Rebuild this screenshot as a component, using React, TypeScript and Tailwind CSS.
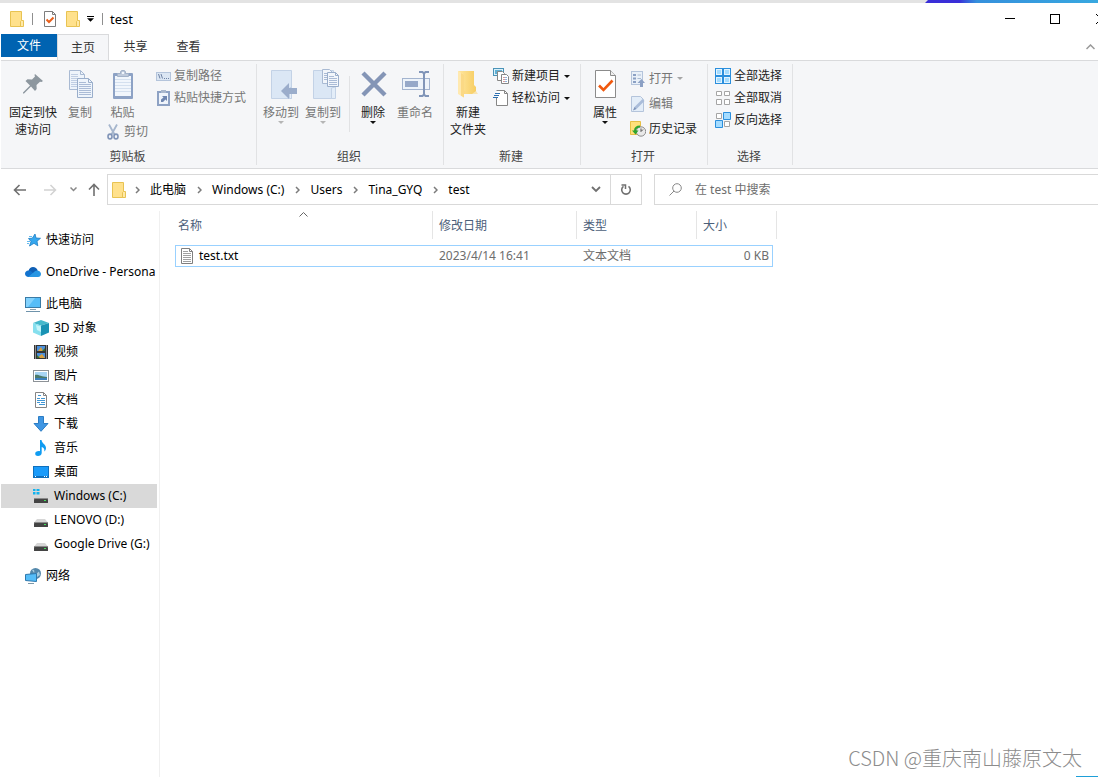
import React from 'react';

type IconProps = { className?: string };

const FolderIcon: React.FC<IconProps> = ({ className = '' }) => (
    <svg width="14" height="16" viewBox="0 0 14 16" className={className} aria-hidden="true">
        <path d="M0.5 0.5H11.5V9L12.5 10V15.5H0.5Z" fill="#ffe18c" stroke="#e8c352" />
        <path d="M10.5 10.5V15.5H13.5V9.5H11.5Z" fill="#ffe9a8" stroke="#e8c352" />
    </svg>
);

const CheckedPageIcon: React.FC = () => (
    <svg width="12" height="16" viewBox="0 0 12 16" aria-hidden="true">
        <path d="M0.5 0.5H8.5L11.5 3.5V15.5H0.5Z" fill="#fff" stroke="#7d7d7d" />
        <path d="M8.5 0.5V3.5H11.5" fill="none" stroke="#7d7d7d" />
        <path d="M2.5 8.5L5 11L9.5 6.5" fill="none" stroke="#e8601c" strokeWidth="2" />
    </svg>
);

const PinIcon: React.FC = () => (
    <svg width="20" height="20" viewBox="0 0 20 20" aria-hidden="true">
        <path
            d="M12 0L20 7L18.5 8L17 7.7L13.5 11L13.7 15L12 17L8 12.5L1 19.5L0 19.5L0 18.5L7 11.5L2.5 7L4.5 5.2L9 5.6L12 2.5L11.5 1Z"
            fill="#8d979f"
        />
    </svg>
);

const CopyIcon: React.FC = () => (
    <svg width="24" height="28" viewBox="0 0 24 28" className="ml-0.5" aria-hidden="true">
        <path d="M0.5 0.5H11.5L15.5 4.5V19.5H0.5Z" fill="#eef4fb" stroke="#a9bad3" />
        <path d="M11.5 0.5V4.5H15.5" fill="none" stroke="#a9bad3" />
        <path
            d="M2 4.5H9M2 6.5H9M2 8.5H13M2 10.5H13M2 12.5H13M2 14.5H13M2 16.5H13"
            stroke="#c0cee3"
        />
        <path d="M8.5 8.5H19.5L23.5 12.5V27.5H8.5Z" fill="#eef4fb" stroke="#9aaecb" />
        <path d="M19.5 8.5V12.5H23.5" fill="none" stroke="#9aaecb" />
        <path
            d="M10 12.5H17M10 14.5H22M10 16.5H22M10 18.5H22M10 20.5H22M10 22.5H22M10 24.5H22"
            stroke="#aabbd6"
        />
    </svg>
);

const PasteIcon: React.FC = () => (
    <svg width="20" height="29" viewBox="0 0 20 29" aria-hidden="true">
        <rect x="0" y="3" width="20" height="26" rx="1" fill="#8da2c5" />
        <rect x="2" y="6" width="16" height="20" fill="#f1f6fc" />
        <path d="M2 9.5H18M2 12.5H18M2 15.5H18M2 18.5H18M2 21.5H18" stroke="#d4e0ef" />
        <path d="M4.5 6.5V3.5H7.5V1.5H8.5V0.5H11.5V1.5H12.5V3.5H15.5V6.5Z" fill="#bfcadb" stroke="#a3b2c9" />
        <rect x="9" y="2" width="2" height="2" fill="#f1f6fc" />
    </svg>
);

const CutIcon: React.FC = () => (
    <svg width="12" height="16" viewBox="0 0 12 16" aria-hidden="true">
        <path d="M2 0.5L7.8 11M10 0.5L4.2 11" stroke="#a6b6cd" strokeWidth="1.8" />
        <ellipse cx="3" cy="12.5" rx="2" ry="2.4" fill="none" stroke="#8195b8" strokeWidth="1.6" />
        <ellipse cx="9" cy="12.5" rx="2" ry="2.4" fill="none" stroke="#8195b8" strokeWidth="1.6" />
    </svg>
);

const CopyPathIcon: React.FC = () => (
    <svg width="15" height="9" viewBox="0 0 15 9" aria-hidden="true">
        <rect x="0.5" y="0.5" width="14" height="8" fill="#dbe6f3" stroke="#b4c4db" />
        <path d="M2.5 2L4 6.5M5 2L6.5 6.5" stroke="#6f83a6" />
        <path d="M8 6.5H9M10 6.5H11M12 6.5H13" stroke="#6f83a6" />
    </svg>
);

const PasteShortcutIcon: React.FC = () => (
    <svg width="13" height="16" viewBox="0 0 13 16" aria-hidden="true">
        <rect x="1" y="2" width="11" height="13" fill="#eff4fb" stroke="#8ea2c4" strokeWidth="2" />
        <rect x="4" y="0" width="5" height="3" fill="#a9b7cc" />
        <path d="M4 12V9.5L6.5 7.5L5 6H10V11L8.5 9.5L6 12Z" fill="#6f86b0" />
    </svg>
);

const MoveToIcon: React.FC = () => (
    <svg width="26" height="29" viewBox="0 0 26 29" className="ml-[5px]" aria-hidden="true">
        <path d="M0.5 0.5H20.5V28.5H0.5Z" fill="#dbe7f5" stroke="#c3d2e6" />
        <path d="M18.5 18V28.5H20.5V17Z" fill="#e8f0f9" stroke="#c3d2e6" />
        <path d="M10 21L18 13V18H26V24H18V29Z" fill="#9badcb" />
    </svg>
);

const CopyToIcon: React.FC = () => (
    <svg width="26" height="30" viewBox="0 0 26 30" className="ml-[5px]" aria-hidden="true">
        <path d="M0.5 1.5H20.5V29.5H0.5Z" fill="#dbe7f5" stroke="#c3d2e6" />
        <path d="M18.5 19V29.5H22.5V18Z" fill="#e3edf8" stroke="#c3d2e6" />
        <path d="M9.5 0.5H16.5L19.5 3.5V14.5H9.5Z" fill="#f2f6fb" stroke="#a9bad3" />
        <path d="M11 4.5H15M11 6.5H15M11 8.5H15M11 10.5H15" stroke="#aabbd6" />
        <path d="M14.5 3.5H22.5L25.5 6.5V17.5H14.5Z" fill="#f2f6fb" stroke="#9aaecb" />
        <path d="M22.5 3.5V6.5H25.5" fill="none" stroke="#9aaecb" />
        <path d="M16 7.5H21M16 9.5H24M16 11.5H24M16 13.5H24M16 15.5H24" stroke="#aabbd6" />
    </svg>
);

const DeleteIcon: React.FC = () => (
    <svg width="26" height="26" viewBox="0 0 26 26" className="ml-0.5" aria-hidden="true">
        <path d="M2 2L24 24M24 2L2 24" stroke="#8495b6" strokeWidth="4.4" />
    </svg>
);

const RenameIcon: React.FC = () => (
    <svg width="28" height="26" viewBox="0 0 28 26" className="ml-0.5" aria-hidden="true">
        <rect x="0.5" y="7.5" width="27" height="11" fill="#edf3fa" stroke="#a3b4cf" />
        <rect x="3" y="10" width="13" height="6" fill="#96a8c8" />
        <path
            d="M17 1H20.5L22 2.5L23.5 1H27M22 2V24M17 25H20.5L22 23.5L23.5 25H27"
            fill="none"
            stroke="#8195b8"
            strokeWidth="2"
        />
    </svg>
);

const NewFolderIcon: React.FC = () => (
    <svg width="20" height="28" viewBox="0 0 20 28" aria-hidden="true">
        <defs>
            <linearGradient id="folder-back" x1="0" x2="1">
                <stop offset="0" stopColor="#ffe7a0" />
                <stop offset="1" stopColor="#f7cd62" />
            </linearGradient>
        </defs>
        <path d="M0 1H16V15L18 17V24H4Z" fill="url(#folder-back)" />
        <path d="M14 24L18 21L20 24Z" fill="#f8e5b4" />
        <path d="M0 1L6 4.5V27.5L0 24Z" fill="#ffe9b0" />
        <path d="M3 3L6 4.5V21H7.5V24H6V27.5L3 25.7Z" fill="#fbd985" />
    </svg>
);

const NewItemIcon: React.FC = () => (
    <svg width="16" height="16" viewBox="0 0 16 16" aria-hidden="true">
        <rect x="0.5" y="0.5" width="10" height="7" fill="#d9f0fa" stroke="#4a93b8" />
        <rect x="2" y="2" width="7" height="4" fill="#5fb0d4" />
        <path d="M4.5 3.5H9.5L11.5 5.5V12.5H4.5Z" fill="#fff" stroke="#868686" />
        <path d="M8.5 6.5H13.5L15.5 8.5V15.5H8.5Z" fill="#fff" stroke="#868686" />
        <path d="M10 9.5H14M10 11.5H14M10 13.5H14" stroke="#d79a9a" />
        <path d="M12 9.5H14M12 11.5H14M12 13.5H14" stroke="#8fb4dc" />
    </svg>
);

const EasyAccessIcon: React.FC = () => (
    <svg width="16" height="16" viewBox="0 0 16 16" aria-hidden="true">
        <path d="M3.5 0.5H11.5L14.5 3.5V15.5H3.5V8" fill="#fff" stroke="#868686" />
        <path d="M11.5 0.5V3.5H14.5" fill="none" stroke="#868686" />
        <path d="M2 3.5H7M1 5.5H6M0 7.5H5" stroke="#2d6fb0" />
    </svg>
);

const PropertiesIcon: React.FC = () => (
    <svg width="21" height="28" viewBox="0 0 21 28" aria-hidden="true">
        <path d="M0.5 0.5H15.5L20.5 5.5V27.5H0.5Z" fill="#fff" stroke="#8b8b8b" />
        <path d="M15.5 0.5V5.5H20.5" fill="#eee" stroke="#8b8b8b" />
        <path d="M4 15.5L8.5 20L17.5 10.5" fill="none" stroke="#f0590f" strokeWidth="2.6" />
    </svg>
);

const OpenIcon: React.FC = () => (
    <svg width="14" height="16" viewBox="0 0 14 16" aria-hidden="true">
        <rect x="0.5" y="0.5" width="11" height="13" fill="#e9f0f8" stroke="#b4c4db" />
        <path d="M2 3H5V5H2ZM2 6.5H5V8.5H2ZM2 10H5V12H2Z" fill="#8ba0c4" />
        <path d="M6.5 4H10M6.5 7.5H10" stroke="#a9bad3" />
        <path d="M6.5 12L10.5 8L14 12H12V16H9V12Z" fill="#8ba0c4" />
    </svg>
);

const EditIcon: React.FC = () => (
    <svg width="14" height="16" viewBox="0 0 14 16" aria-hidden="true">
        <path d="M0.5 0.5H9.5L12.5 3.5V15.5H0.5Z" fill="#e3edf8" stroke="#b4c4db" />
        <path d="M2.5 14L4 10.5L11.5 3L13.5 5L6 12.5Z" fill="#a9bcd9" />
        <path d="M2 14.5L3.5 11L5.5 13Z" fill="#7f95bb" />
    </svg>
);

const HistoryIcon: React.FC = () => (
    <svg width="16" height="16" viewBox="0 0 16 16" aria-hidden="true">
        <path d="M0.5 0.5H10.5V13.5H0.5Z" fill="#ffe07a" stroke="#e6bf45" />
        <circle cx="11" cy="10.5" r="4.7" fill="#e9e9e9" stroke="#8d8d8d" />
        <path d="M11 7.5V10.5L13 8.5" fill="none" stroke="#555" />
        <path d="M10 5.5C6.5 5.5 5 7.5 5 10" fill="none" stroke="#2fa52f" strokeWidth="2" />
        <path d="M2 9.5H8.5L5.5 13.5Z" fill="#2fa52f" />
    </svg>
);

const SelectAllIcon: React.FC = () => (
    <svg width="16" height="16" viewBox="0 0 16 16" aria-hidden="true">
        <rect width="16" height="16" fill="#2b8fdd" />
        <path d="M1 1H7V7H1ZM9 1H15V7H9ZM1 9H7V15H1ZM9 9H15V15H9Z" fill="#e3f4ff" />
        <path d="M2 2H6V6H2ZM10 2H14V6H10ZM2 10H6V14H2ZM10 10H14V14H10Z" fill="#a5dcff" />
    </svg>
);

const SelectNoneIcon: React.FC = () => (
    <svg width="16" height="16" viewBox="0 0 16 16" aria-hidden="true">
        <path
            d="M1.5 1.5H6.5V5.5H1.5ZM9.5 1.5H14.5V5.5H9.5ZM1.5 9.5H6.5V14.5H1.5ZM9.5 9.5H14.5V14.5H9.5Z"
            fill="#fff"
            stroke="#a5a5a5"
        />
    </svg>
);

const InvertIcon: React.FC = () => (
    <svg width="16" height="16" viewBox="0 0 16 16" aria-hidden="true">
        <path d="M1.5 1.5H6.5V6.5H1.5ZM9.5 9.5H14.5V14.5H9.5Z" fill="#fff" stroke="#a5a5a5" />
        <path d="M8.5 0.5H15.5V7.5H8.5ZM0.5 8.5H7.5V15.5H0.5Z" fill="#a5dcff" stroke="#2b8fdd" />
    </svg>
);

const StarIcon: React.FC = () => (
    <svg width="16" height="16" viewBox="0 0 16 16" aria-hidden="true">
        <path
            d="M10 2L11 6L15.5 6.3L12 9.2L12.8 13.8L9 11.3L4.5 14L6 9.5L3.5 6.5L7.3 6.2Z"
            fill="#35a7ee"
            stroke="#1b7cc4"
            strokeWidth="0.8"
        />
        <path d="M4 4.5H7M2 9.5H5M2 11.5H4" stroke="#63baf0" />
    </svg>
);

const CloudIcon: React.FC = () => (
    <svg width="16" height="16" viewBox="0 0 16 16" aria-hidden="true">
        <path d="M3.5 7C4 4.5 6 3 8 3C10.2 3 12 4.2 12.7 6.5L9 10L2 9Z" fill="#0f5fb5" />
        <path d="M3.5 13C1.5 13 0 11.7 0 9.8C0 8 1.5 6.5 3.3 6.5C5 6.5 6 7.2 8 9L6 13Z" fill="#1273cf" />
        <path d="M3 13L8.5 8.5C10 6.5 12 6 13.3 6.8C15.2 7.5 16 8.7 16 10C16 11.8 14.7 13 13 13Z" fill="#2796e3" />
    </svg>
);

const PcIcon: React.FC = () => (
    <svg width="16" height="16" viewBox="0 0 16 16" aria-hidden="true">
        <rect x="0.5" y="1.5" width="15" height="10" fill="#55bdf8" stroke="#3a7ba6" />
        <path d="M1 2H10L3 11H1Z" fill="#83d2fd" />
        <path d="M5 13.5H11" stroke="#8aa0ae" />
        <path d="M1 15.5H15" stroke="#6f93ab" />
    </svg>
);

const CubeIcon: React.FC = () => (
    <svg width="16" height="16" viewBox="0 0 16 16" aria-hidden="true">
        <path d="M0 3L8 0L16 3L8 5.5Z" fill="#45b9cc" />
        <path d="M0 3L8 5.5V16L0 12.5Z" fill="#86dfee" />
        <path d="M16 3L8 5.5V16L16 12.5Z" fill="#1993b4" />
        <path d="M3 5L8 6.5V12L4 10Z" fill="#c6f5fa" />
    </svg>
);

const VideoIcon: React.FC = () => (
    <svg width="16" height="16" viewBox="0 0 16 16" aria-hidden="true">
        <rect x="1" y="1" width="14" height="14" fill="#333" />
        <path d="M2.5 1.5V15M13.5 1.5V15" stroke="#e6e6e6" strokeDasharray="1 1" />
        <rect x="4" y="2" width="8" height="5" fill="#4b8fdb" />
        <rect x="4" y="9" width="8" height="5" fill="#4b8fdb" />
        <path d="M5 7L8 3L10 7ZM4 14L9 10L12 14Z" fill="#d9a03c" />
        <path d="M9 7L12 4V7ZM4 14V11L7 14Z" fill="#37702f" />
    </svg>
);

const PictureIcon: React.FC = () => (
    <svg width="16" height="16" viewBox="0 0 16 16" aria-hidden="true">
        <rect x="0.5" y="2.5" width="15" height="11" fill="#fff" stroke="#8d9297" />
        <rect x="2" y="4" width="12" height="8" fill="#a8d5f4" />
        <path d="M2 7C5 6 8 9 14 9V12H2Z" fill="#4b7a6b" />
        <path d="M2 10H14V12H2Z" fill="#3c7fbc" />
    </svg>
);

const DocumentIcon: React.FC = () => (
    <svg width="16" height="16" viewBox="0 0 16 16" aria-hidden="true">
        <path d="M2.5 0.5H10.5L13.5 3.5V15.5H2.5Z" fill="#fff" stroke="#858585" />
        <path d="M10.5 0.5V3.5H13.5" fill="none" stroke="#858585" />
        <path d="M5 3.5H8M4 6.5H7M8 6.5H12M4 8.5H12M4 10.5H7M8 10.5H12M6 12.5H12" stroke="#4096d4" />
    </svg>
);

const DownloadIcon: React.FC = () => (
    <svg width="16" height="16" viewBox="0 0 16 16" aria-hidden="true">
        <path d="M5.5 0.5H10.5V7.5H15L8 15.3L1 7.5H5.5Z" fill="#3f96e3" stroke="#2b7cc4" />
    </svg>
);

const MusicIcon: React.FC = () => (
    <svg width="16" height="16" viewBox="0 0 16 16" aria-hidden="true">
        <path
            d="M7 0H8.5C9 3.5 13 4.5 13 8C13 9.8 12 11 11.3 11.5C11.8 9 10.5 7.5 8.7 7V13C8.7 14.8 7 16 5 16C3.3 16 2.2 15 2.2 13.7C2.2 12 4 10.8 7 11.2Z"
            fill="#109cf1"
        />
    </svg>
);

const DesktopIcon: React.FC = () => (
    <svg width="16" height="16" viewBox="0 0 16 16" aria-hidden="true">
        <rect x="0.5" y="2.5" width="15" height="11" fill="#1a9bfa" stroke="#0f70bd" />
        <path d="M1 12.5H15" stroke="#0e6dba" />
        <path d="M2 12.5H3M11 12.5H12M13 12.5H14" stroke="#fff" />
    </svg>
);

const DriveIcon: React.FC<{ system?: boolean }> = ({ system }) => (
    <svg width="16" height="16" viewBox="0 0 16 16" aria-hidden="true">
        <path d="M4 7H12L14.5 10H1.5Z" fill="#d6d6d6" />
        <rect x="1" y="10" width="14" height="1" fill="#8b8b8b" />
        <rect x="1" y="11" width="14" height="4" rx="0.5" fill="#444" />
        <rect x="11" y="12" width="2" height="1" fill="#43e05b" />
        {system && <rect width="8" height="8" fill="#d9d9d9" />}
        {system && <path d="M0 1H2.5V3H0ZM3.500 1H6.500V3H3.500ZM0 4H2.500V6.500H0ZM3.500 4H6.500V6.500H3.500Z" fill="#12b3ee" />}
    </svg>
);

const NetworkIcon: React.FC = () => (
    <svg width="16" height="16" viewBox="0 0 16 16" aria-hidden="true">
        <circle cx="10.5" cy="5.5" r="5.5" fill="#5488ab" />
        <path d="M7 2C9 1 10 3 9 4.5L11 6L14 3.5L15 7L12 9Z" fill="#a9cde0" />
        <path d="M0.5 6.5L11.5 5.5V13.5L0.5 12.5Z" fill="#55bdf8" stroke="#2e78ad" />
        <path d="M3 15.5H9" stroke="#7b98aa" />
    </svg>
);

const TextFileIcon: React.FC = () => (
    <svg width="12" height="16" viewBox="0 0 12 16" className="shrink-0" aria-hidden="true">
        <path d="M0.5 0.5H8.5L11.5 3.5V15.5H0.5Z" fill="#fff" stroke="#7f7f7f" />
        <path d="M8.5 0.5V3.5H11.5" fill="none" stroke="#7f7f7f" />
        <path d="M2 3.5H7M2 5.5H10M2 7.5H10M2 9.5H10M2 11.5H10M2 13.5H10" stroke="#a0a0a0" />
    </svg>
);

const Caret: React.FC<IconProps> = ({ className = '' }) => (
    <svg width="6" height="3" viewBox="0 0 6 3" className={className} aria-hidden="true">
        <path d="M0 0H6L3 3Z" fill="currentColor" />
    </svg>
);

const Chevron: React.FC<IconProps> = ({ className = '' }) => (
    <svg width="5" height="8" viewBox="0 0 5 8" className={className} aria-hidden="true">
        <path d="M1 1L4 4L1 7" fill="none" stroke="#7b7b7b" strokeWidth="1.5" />
    </svg>
);

type ButtonProps = {
    icon: React.ReactNode;
    label: React.ReactNode;
    width?: string;
    disabled?: boolean;
    arrow?: boolean;
};

const BigButton: React.FC<ButtonProps> = ({ icon, label, width = '', disabled, arrow }) => (
    <button
        disabled={disabled}
        className={`flex flex-col items-center pt-[3px] ${width} ${disabled ? 'text-[#767676]' : 'text-[#222]'}`}
    >
        <span className="flex h-8 items-center">{icon}</span>
        <span className="mt-1 leading-[17px]">{label}</span>
        {arrow && <Caret className={disabled ? 'text-[#b5b5b5]' : 'text-[#111]'} />}
    </button>
);

const SmallButton: React.FC<ButtonProps> = ({ icon, label, width = 'h-[22px]', disabled, arrow }) => (
    <button
        disabled={disabled}
        className={`flex items-center whitespace-nowrap ${width} ${disabled ? 'text-[#767676]' : 'text-[#222]'}`}
    >
        <span className="flex w-4 justify-center">{icon}</span>
        <span className="ml-[3px]">{label}</span>
        {arrow && <Caret className={`ml-1 ${disabled ? 'text-[#a5a5a5]' : 'text-[#111]'}`} />}
    </button>
);

const Group: React.FC<{ title: string; width: string; children: React.ReactNode }> = ({
    title,
    width,
    children,
}) => (
    <section className={`my-[3px] flex shrink-0 flex-col border-r border-[#e1e2e4] pt-px ${width}`}>
        <div className="flex h-[84px] items-start">{children}</div>
        <h2 className="pr-0.5 text-center leading-4 text-[#444]">{title}</h2>
    </section>
);

const Ribbon: React.FC = () => (
    <div className="flex h-[109px] border-y border-[#d9dadc] bg-[#f5f6f8]">
        <Group title="剪贴板" width="w-[256px]">
            <BigButton width="ml-0.5 w-[60px]" icon={<PinIcon />} label={<>固定到快<br />速访问</>} />
            <BigButton width="w-[34px]" icon={<CopyIcon />} label="复制" disabled />
            <div className="w-[58px]">
                <BigButton width="w-[51px]" icon={<PasteIcon />} label="粘贴" disabled />
                <SmallButton width="ml-2 h-[22px]" icon={<CutIcon />} label="剪切" disabled />
            </div>
            <div>
                <SmallButton icon={<CopyPathIcon />} label="复制路径" disabled />
                <SmallButton icon={<PasteShortcutIcon />} label="粘贴快捷方式" disabled />
            </div>
        </Group>
        <Group title="组织" width="w-[187px]">
            <BigButton width="ml-[3px] w-[42px]" icon={<MoveToIcon />} label="移动到" disabled arrow />
            <BigButton width="w-[42px]" icon={<CopyToIcon />} label="复制到" disabled arrow />
            <span className="mt-[11px] ml-[5px] h-14 w-px bg-[#e1e2e4]" />
            <BigButton width="w-[46px]" icon={<DeleteIcon />} label="删除" arrow />
            <BigButton width="w-[38px]" icon={<RenameIcon />} label="重命名" disabled />
        </Group>
        <Group title="新建" width="w-[137px]">
            <BigButton width="ml-px w-[46px]" icon={<NewFolderIcon />} label={<>新建<br />文件夹</>} />
            <div className="ml-0.5">
                <SmallButton icon={<NewItemIcon />} label="新建项目" arrow />
                <SmallButton icon={<EasyAccessIcon />} label="轻松访问" arrow />
            </div>
        </Group>
        <Group title="打开" width="w-[127px]">
            <BigButton width="ml-px w-[46px]" icon={<PropertiesIcon />} label="属性" arrow />
            <div className="ml-0.5 pt-px">
                <SmallButton width="h-[25px]" icon={<OpenIcon />} label="打开" disabled arrow />
                <SmallButton width="h-[25px]" icon={<EditIcon />} label="编辑" disabled />
                <SmallButton width="h-[25px]" icon={<HistoryIcon />} label="历史记录" />
            </div>
        </Group>
        <Group title="选择" width="w-[85px]">
            <div className="ml-[7px]">
                <SmallButton icon={<SelectAllIcon />} label="全部选择" />
                <SmallButton icon={<SelectNoneIcon />} label="全部取消" />
                <SmallButton icon={<InvertIcon />} label="反向选择" />
            </div>
        </Group>
    </div>
);

const TitleBar: React.FC = () => (
    <header className="flex h-[31px] items-center pl-[9px]">
        <FolderIcon />
        <span className="ml-2 h-3 w-px bg-[#8f8f8f]" />
        <button aria-label="属性" className="ml-[11px]">
            <CheckedPageIcon />
        </button>
        <button aria-label="新建文件夹" className="ml-[10px]">
            <FolderIcon />
        </button>
        <button aria-label="自定义快速访问工具栏" className="ml-[7px] flex flex-col items-center gap-px pt-px">
            <span className="h-px w-[7px] bg-black" />
            <Caret className="h-1 w-[7px]" />
        </button>
        <span className="ml-2 h-3 w-px bg-[#8f8f8f]" />
        <h1 className="ml-[7px] text-[13px]">test</h1>
        <div className="ml-auto flex items-center">
            <button aria-label="最小化" className="flex w-[45px] justify-center">
                <span className="h-px w-2.5 bg-black" />
            </button>
            <button aria-label="最大化" className="flex w-[45px] justify-center">
                <span className="h-2.5 w-2.5 border border-black" />
            </button>
            {/* the close button runs past the right edge */}
            <button aria-label="关闭" className="ml-[19px] w-[2px] overflow-hidden">
                <svg width="10" height="10" viewBox="0 0 10 10" aria-hidden="true">
                    <path d="M0 0L10 10M10 0L0 10" stroke="#000" />
                </svg>
            </button>
        </div>
    </header>
);

const Tabs: React.FC = () => (
    <nav className="flex h-[26px] text-[#333]">
        <button className="h-[23px] w-14 bg-[#0063b1] text-white">文件</button>
        <button className="-mb-px w-[52px] border border-b-0 border-[#d9dadc] bg-[#f5f6f8]">主页</button>
        <button className="w-[53px]">共享</button>
        <button className="w-[53px]">查看</button>
        <button aria-label="折叠功能区" className="mr-[3px] ml-auto">
            <svg width="9" height="6" viewBox="0 0 9 6" aria-hidden="true">
                <path d="M0.5 5L4.5 1L8.5 5" fill="none" stroke="#999" strokeWidth="1.5" />
            </svg>
        </button>
    </nav>
);

const crumbs = ['此电脑', 'Windows (C:)', 'Users', 'Tina_GYQ', 'test'];

const AddressRow: React.FC = () => (
    <div className="flex h-9 items-end pl-3">
        <div className="flex h-[31px] items-center">
            <button aria-label="后退">
                <svg width="14" height="12" viewBox="0 0 14 12" aria-hidden="true">
                    <path d="M13 6H2M6.5 1L1.5 6L6.5 11" fill="none" stroke="#707070" strokeWidth="1.6" />
                </svg>
            </button>
            <button aria-label="前进" className="ml-4">
                <svg width="14" height="12" viewBox="0 0 14 12" aria-hidden="true">
                    <path d="M1 6H12M7.5 1L12.5 6L7.5 11" fill="none" stroke="#d2d2d2" strokeWidth="1.5" />
                </svg>
            </button>
            <button aria-label="最近浏览的位置" className="ml-[13px]">
                <svg width="7" height="5" viewBox="0 0 7 5" aria-hidden="true">
                    <path d="M0.5 0.5L3.5 3.5L6.5 0.5" fill="none" stroke="#888" strokeWidth="1.5" />
                </svg>
            </button>
            <button aria-label="向上" className="ml-[11px]">
                <svg width="12" height="14" viewBox="0 0 12 14" aria-hidden="true">
                    <path d="M6 13V2M1 6.5L6 1.5L11 6.5" fill="none" stroke="#707070" strokeWidth="1.6" />
                </svg>
            </button>
        </div>
        <div className="ml-[7px] flex h-[31px] min-w-0 flex-1 items-center border border-[#d9d9d9] pl-1">
            <FolderIcon className="-mr-0.5 shrink-0" />
            {crumbs.map((name) => (
                <React.Fragment key={name}>
                    <Chevron className="ml-[11px] shrink-0" />
                    <button className="ml-[10px] whitespace-nowrap">{name}</button>
                </React.Fragment>
            ))}
            <button aria-label="以前的位置" className="mr-[9px] ml-auto">
                <svg width="10" height="7" viewBox="0 0 10 7" aria-hidden="true">
                    <path d="M1 1L5 5L9 1" fill="none" stroke="#707070" strokeWidth="1.8" />
                </svg>
            </button>
            <button
                aria-label="刷新"
                className="flex h-full w-[31px] items-center justify-center border-l border-[#d9d9d9]"
            >
                <svg width="12" height="12" viewBox="0 0 12 12" aria-hidden="true">
                    <path d="M8.5 2.3A4.3 4.3 0 1 1 3.5 2.3" fill="none" stroke="#707070" strokeWidth="1.6" />
                    <path d="M1.5 1H5.5V5" fill="none" stroke="#707070" strokeWidth="1.5" />
                </svg>
            </button>
        </div>
        <label className="ml-3 flex h-[31px] w-[444px] shrink-0 items-center border border-r-0 border-[#d9d9d9] pl-[14px]">
            <svg width="13" height="13" viewBox="0 0 13 13" aria-hidden="true">
                <circle cx="8" cy="5" r="4.3" fill="none" stroke="#888" />
                <path d="M5 8L0.5 12.5" stroke="#888" />
            </svg>
            <input
                type="search"
                aria-label="搜索"
                placeholder="在 test 中搜索"
                className="ml-[13px] min-w-0 flex-1 outline-none placeholder:text-[#6d6d6d]"
            />
        </label>
    </div>
);

type NavItem = { label: string; icon: React.ReactNode; selected?: boolean };

const places: NavItem[] = [
    { label: '3D 对象', icon: <CubeIcon /> },
    { label: '视频', icon: <VideoIcon /> },
    { label: '图片', icon: <PictureIcon /> },
    { label: '文档', icon: <DocumentIcon /> },
    { label: '下载', icon: <DownloadIcon /> },
    { label: '音乐', icon: <MusicIcon /> },
    { label: '桌面', icon: <DesktopIcon /> },
    { label: 'Windows (C:)', icon: <DriveIcon system />, selected: true },
    { label: 'LENOVO (D:)', icon: <DriveIcon /> },
    { label: 'Google Drive (G:)', icon: <DriveIcon /> },
];

const NavLink: React.FC<{ item: NavItem; nested?: boolean }> = ({ item, nested }) => (
    <a
        href="#"
        className={`flex h-6 items-center gap-[5px] whitespace-nowrap ${nested ? 'pl-8' : 'pl-6'} ${
            item.selected ? 'bg-[#d9d9d9]' : ''
        }`}
    >
        <span className="shrink-0">{item.icon}</span>
        {item.label}
    </a>
);

const Sidebar: React.FC = () => (
    <aside className="flex w-[156px] shrink-0 flex-col gap-2 overflow-hidden pt-[23px]">
        <NavLink item={{ label: '快速访问', icon: <StarIcon /> }} />
        <NavLink item={{ label: 'OneDrive - Persona', icon: <CloudIcon /> }} />
        <div>
            <NavLink item={{ label: '此电脑', icon: <PcIcon /> }} />
            {places.map((place) => (
                <NavLink key={place.label} item={place} nested />
            ))}
        </div>
        <NavLink item={{ label: '网络', icon: <NetworkIcon /> }} />
    </aside>
);

const FileList: React.FC = () => (
    <main className="flex-1 pl-[15px]">
        <table className="w-[602px] table-fixed border-separate border-spacing-x-0 border-spacing-y-[6px] text-left">
            <colgroup>
                <col className="w-[258px]" />
                <col className="w-36" />
                <col className="w-[120px]" />
                <col className="w-[76px]" />
                <col className="w-1" />
            </colgroup>
            <thead>
                <tr className="h-7 text-[#4c607a] [&>th]:border-r [&>th]:border-[#e5e5e5] [&>th]:pt-0.5 [&>th]:font-normal">
                    <th className="relative pl-[3px]">
                        名称
                        <svg
                            width="9"
                            height="5"
                            viewBox="0 0 9 5"
                            className="absolute top-px left-1/2 -ml-[5px]"
                            aria-hidden="true"
                        >
                            <path d="M0.5 4.5L4.5 0.5L8.5 4.5" fill="none" stroke="#666" />
                        </svg>
                    </th>
                    <th className="pl-1.5">修改日期</th>
                    <th className="pl-1.5">类型</th>
                    <th className="pl-1.5" colSpan={2}>
                        大小
                    </th>
                </tr>
            </thead>
            <tbody>
                <tr className="h-[22px] text-[#6d6d6d]">
                    <td className="border-y border-l border-[#99d1ff] pl-[5px] text-black">
                        <span className="flex items-center gap-[6px]">
                            <TextFileIcon />
                            test.txt
                        </span>
                    </td>
                    <td className="border-y border-[#99d1ff] pl-1.5">2023/4/14 16:41</td>
                    <td className="border-y border-[#99d1ff] pl-1.5">文本文档</td>
                    <td className="border-y border-r border-[#99d1ff] pr-[3px] text-right">0 KB</td>
                    <td />
                </tr>
            </tbody>
        </table>
    </main>
);

const App: React.FC = () => (
    <div className="relative flex min-h-screen flex-col overflow-hidden bg-white pl-px font-['Noto_Sans','Noto_Sans_CJK_SC',sans-serif] text-[12px] leading-4 text-black">
        {/* desktop showing above the window */}
        <div className="-ml-px flex h-[3px] bg-[#e3e3e3]">
            <span className="ml-auto w-[173px] bg-linear-to-r from-[#3a2fd8] from-20% via-[#3590dc] via-30% to-[#38a8e0] [clip-path:polygon(3px_0,100%_0,100%_100%,0_100%)]" />
        </div>
        <TitleBar />
        <Tabs />
        <Ribbon />
        <AddressRow />
        <div className="flex flex-1">
            <Sidebar />
            <span className="mt-1.5 ml-0.5 w-px bg-[#f0f0f0]" />
            <FileList />
        </div>
        <p className="absolute right-4 bottom-1.5 font-['Noto_Sans_CJK_SC',sans-serif] text-[20px] leading-[26px] font-light text-[#8c8c8c]">
            CSDN @重庆南山藤原文太
        </p>
        <span className="absolute right-0 bottom-0 h-px w-[22px] bg-[#1e9fd8]" />
    </div>
);

export default App;
